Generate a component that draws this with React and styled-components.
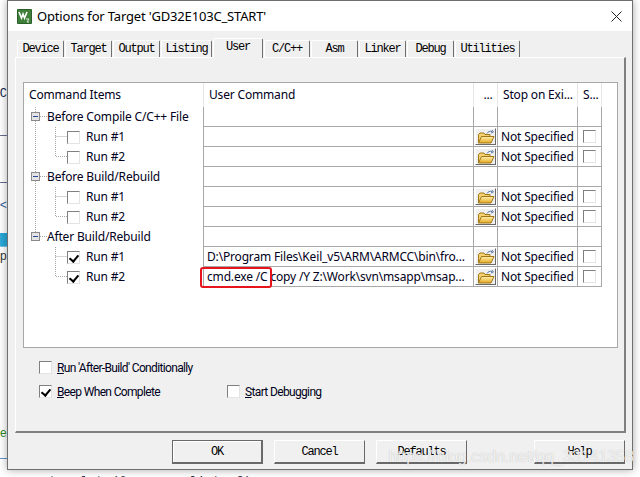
import React from "react";
import styled, { createGlobalStyle } from "styled-components";

const UI_FONT = `"Noto Sans", "Open Sans", "Liberation Sans", sans-serif`;
const MONO_FONT = `"Liberation Mono", "DejaVu Sans Mono", monospace`;

const tabs = [
  { label: "Device", width: 47 },
  { label: "Target", width: 47 },
  { label: "Output", width: 47 },
  { label: "Listing", width: 51 },
  { label: "User", width: 50, active: true },
  { label: "C/C++", width: 46 },
  { label: "Asm", width: 47 },
  { label: "Linker", width: 47 },
  { label: "Debug", width: 47 },
  { label: "Utilities", width: 65 },
];

const groups = [
  {
    title: "Before Compile C/C++ File",
    runs: [{ name: "Run #1" }, { name: "Run #2" }],
  },
  {
    title: "Before Build/Rebuild",
    runs: [{ name: "Run #1" }, { name: "Run #2" }],
  },
  {
    title: "After Build/Rebuild",
    last: true,
    runs: [
      { name: "Run #1", checked: true, command: "D:\\Program Files\\Keil_v5\\ARM\\ARMCC\\bin\\fro..." },
      { name: "Run #2", checked: true, marked: "cmd.exe /C", command: " copy /Y Z:\\Work\\svn\\msapp\\msap..." },
    ],
  },
];

const gutterLines = [
  { text: "IC", top: 87, color: "#14284a" },
  { text: "e _", top: 23, color: "#101c50" },
  { text: "e _", top: 33, color: "#101c50" },
  { text: "<", top: 14, color: "#3060a0" },
  { text: "█", top: 20, color: "#28a8d8" },
  { text: "ap", top: 3, color: "#333" },
  { text: "ce", top: 163, color: "#2a8a20" },
  { text: "I_", top: 6, color: "#1060b0" },
];

export default function App() {
  return (
    <>
      <GlobalStyle />
      <Desktop>
        <Gutter>
          {gutterLines.map((line, index) => (
            <CodeLine key={index} $top={line.top} $color={line.color}>
              {line.text}
            </CodeLine>
          ))}
        </Gutter>
        <Dialog>
          <TitleBar>
            <AppIcon />
            <Title>Options for Target 'GD32E103C_START'</Title>
            <CloseIcon />
          </TitleBar>
          <TabStrip>
            {tabs.map((tab) => (
              <Tab key={tab.label} $width={tab.width} $active={tab.active}>
                {tab.label}
              </Tab>
            ))}
          </TabStrip>
          <Panel>
            <List>
              <HeaderRow>
                <HeaderCell>Command Items</HeaderCell>
                <HeaderCell>User Command</HeaderCell>
                <HeaderCell $center>...</HeaderCell>
                <HeaderCell>Stop on Exi...</HeaderCell>
                <HeaderCell>S...</HeaderCell>
              </HeaderRow>
              {groups.map((group) => (
                <React.Fragment key={group.title}>
                  <GridRow>
                    <TreeCell>
                      <GroupGlyph last={group.last} />
                      {group.title}
                    </TreeCell>
                    <Cell />
                    <Cell />
                    <Cell />
                    <Cell />
                  </GridRow>
                  {group.runs.map((run, index) => (
                    <GridRow key={run.name}>
                      <TreeCell>
                        <RunGlyph trunk={!group.last} end={index === group.runs.length - 1} />
                        <CheckBox $checked={run.checked} />
                        <RunName>{run.name}</RunName>
                      </TreeCell>
                      <CommandCell>
                        {run.marked && <Marked>{run.marked}</Marked>}
                        {run.command}
                      </CommandCell>
                      <Cell>
                        <BrowseButton>
                          <FolderIcon />
                        </BrowseButton>
                      </Cell>
                      <StopCell>Not Specified</StopCell>
                      <Cell>
                        <CheckBox />
                      </Cell>
                    </GridRow>
                  ))}
                </React.Fragment>
              ))}
            </List>
            <Options>
              <Option>
                <CheckBox />
                <span>
                  <u>R</u>un 'After-Build' Conditionally
                </span>
              </Option>
              <span />
              <Option>
                <CheckBox $checked />
                <span>
                  <u>B</u>eep When Complete
                </span>
              </Option>
              <Option>
                <CheckBox />
                <span>
                  <u>S</u>tart Debugging
                </span>
              </Option>
            </Options>
          </Panel>
          <Footer>
            <Button $primary>OK</Button>
            <Button>Cancel</Button>
            <Button>Defaults</Button>
            <Button $push>Help</Button>
          </Footer>
          <Watermark>https://blog.csdn.net/qq_33141358</Watermark>
        </Dialog>
      </Desktop>
      <BehindText>  .. template(&amp;sys_mem_list, 0)</BehindText>
    </>
  );
}

function AppIcon() {
  return (
    <IconSvg width="15" height="15" viewBox="0 0 15 15">
      <rect width="15" height="15" rx="1" fill="#3f7f3a" />
      <rect x="0.5" y="0.5" width="14" height="14" rx="1" fill="none" stroke="#2a5f2a" />
      <path d="M2 3l2.5 6L6 5l1.5 4L10 3" fill="none" stroke="#fff" strokeWidth="1.6" />
      <path d="M9 10h3l-2 3h2" fill="none" stroke="#d8ead8" strokeWidth="1" />
    </IconSvg>
  );
}

function CloseIcon() {
  return (
    <CloseSvg width="11" height="11" viewBox="0 0 11 11">
      <path d="M0.5 0.5l10 10M10.5 0.5l-10 10" stroke="#222" strokeWidth="1" fill="none" />
    </CloseSvg>
  );
}

function GroupGlyph({ last }) {
  return (
    <GlyphSvg width="24" height="20" viewBox="0 0 24 20">
      <path
        d={last ? "M11.5 0V5" : "M11.5 0V5M11.5 14V20"}
        stroke="#a8a8a8"
        strokeDasharray="1 1"
        fill="none"
      />
      <path d="M16 9.5H24" stroke="#a8a8a8" strokeDasharray="1 1" fill="none" />
      <rect x="7.5" y="5.5" width="8" height="8" fill="#e4e4e4" stroke="#8a8a8a" />
      <path d="M9 9.5h5" stroke="#2a4a9a" fill="none" />
    </GlyphSvg>
  );
}

function RunGlyph({ trunk, end }) {
  return (
    <GlyphSvg width="44" height="20" viewBox="0 0 44 20">
      {trunk && <path d="M11.5 0V20" stroke="#a8a8a8" strokeDasharray="1 1" fill="none" />}
      <path
        d={end ? "M31.5 0V9.5H44" : "M31.5 0V20M31.5 9.5H44"}
        stroke="#a8a8a8"
        strokeDasharray="1 1"
        fill="none"
      />
    </GlyphSvg>
  );
}

function FolderIcon() {
  return (
    <svg width="18" height="14" viewBox="0 0 18 14">
      <defs>
        <linearGradient id="folderFront" x1="0" y1="0" x2="0" y2="1">
          <stop offset="0" stopColor="#fff0b0" />
          <stop offset="1" stopColor="#e8a820" />
        </linearGradient>
      </defs>
      <path d="M1.5 13V4.5L3 3h4l1 1.5h5V7" fill="#f4d070" stroke="#a07818" />
      <path d="M1.5 13L4.5 6.5H17L14 13Z" fill="url(#folderFront)" stroke="#a07818" />
      <path d="M10 3.5C11 1.5 13 1 15 1.5M15 0L16.5 2L14 3" fill="none" stroke="#5a78a8" />
    </svg>
  );
}

const GlobalStyle = createGlobalStyle`
  html, body {
    margin: 0;
    padding: 0;
    background: #fff;
    width: 640px;
    height: 477px;
    overflow: hidden;
  }
  * {
    box-sizing: border-box;
  }
`;

const Desktop = styled.div`
  display: flex;
  width: 640px;
  height: 470px;
`;

const Gutter = styled.div`
  width: 7px;
  flex: none;
  overflow: hidden;
  display: flex;
  flex-direction: column;
  align-items: flex-end;
`;

const CodeLine = styled.div`
  margin-top: ${(p) => p.$top}px;
  height: 14px;
  font: 12px/14px ${MONO_FONT};
  color: ${(p) => p.$color};
  white-space: nowrap;
`;

const Dialog = styled.div`
  position: relative;
  width: 626px;
  height: 470px;
  flex: none;
  display: flex;
  flex-direction: column;
  background: #f0f0f0;
  border: 1px solid #6f6f6f;
  box-shadow: 0 0 8px rgba(0, 0, 0, 0.35);
`;

const TitleBar = styled.div`
  height: 30px;
  flex: none;
  display: flex;
  align-items: center;
  gap: 5px;
  padding: 0 10px 0 9px;
  background: #fff;
`;

const IconSvg = styled.svg`
  flex: none;
`;

const CloseSvg = styled.svg`
  flex: none;
  margin-left: auto;
`;

const Title = styled.div`
  font: 13px/16px ${UI_FONT};
  letter-spacing: -0.17px;
  color: #000;
  white-space: nowrap;
`;

const TabStrip = styled.div`
  height: 26px;
  flex: none;
  display: flex;
  align-items: flex-end;
  gap: 1px;
  padding-left: 9px;
  position: relative;
  z-index: 1;
`;

const Tab = styled.div`
  width: ${(p) => p.$width}px;
  height: ${(p) => (p.$active ? 20 : 17)}px;
  margin-bottom: ${(p) => (p.$active ? -1 : 0)}px;
  padding-top: 1px;
  text-align: center;
  font: 12px/14px ${MONO_FONT};
  letter-spacing: -1.2px;
  color: #000;
  background: #f0f0f0;
  border-top: 1px solid #fff;
  border-left: 1px solid #fff;
  border-right: 1px solid #6f6f6f;
  border-radius: 2px 2px 0 0;
`;

const Panel = styled.div`
  width: 611px;
  height: 376px;
  flex: none;
  margin-left: 7px;
  padding: 24px 0 0 7px;
  border-top: 1px solid #fff;
  border-left: 1px solid #fff;
  border-right: 2px solid #808080;
  border-bottom: 2px solid #808080;
`;

const List = styled.div`
  width: 595px;
  height: 266px;
  background: #fff;
  border: 1px solid #a8a8a8;
  font: 12px/16px ${UI_FONT};
  letter-spacing: -0.17px;
  color: #000020;
`;

const COLUMNS = "180px 270px 24px 80px 24px";

const HeaderRow = styled.div`
  display: grid;
  grid-template-columns: ${COLUMNS};
  height: 24px;
`;

const HeaderCell = styled.div`
  display: flex;
  align-items: center;
  justify-content: ${(p) => (p.$center ? "center" : "flex-start")};
  padding-left: 5px;
  border-right: 1px solid #e6e6e6;
  white-space: nowrap;
  overflow: hidden;
`;

const GridRow = styled.div`
  display: grid;
  grid-template-columns: ${COLUMNS};
  height: 20px;
`;

const Cell = styled.div`
  display: flex;
  align-items: center;
  justify-content: center;
  border-right: 1px solid #a8a8a8;
  border-bottom: 1px solid #a8a8a8;
  white-space: pre;
`;

const TreeCell = styled.div`
  display: flex;
  align-items: center;
  border-right: 1px solid #a8a8a8;
  white-space: nowrap;
`;

const GlyphSvg = styled.svg`
  flex: none;
  margin-right: -1px;
`;

const RunName = styled.span`
  margin-left: 6px;
`;

const CommandCell = styled(Cell)`
  justify-content: flex-start;
  padding-left: 3px;
  overflow: visible;
`;

const StopCell = styled(Cell)`
  justify-content: flex-start;
  padding-left: 3px;
`;

const Marked = styled.span`
  position: relative;
  &::after {
    content: "";
    position: absolute;
    left: -7px;
    right: -5px;
    top: -2px;
    bottom: -3px;
    border: 2.5px solid #e8141c;
    border-radius: 3px;
  }
`;

const CheckBox = styled.span`
  flex: none;
  display: inline-block;
  position: relative;
  width: 13px;
  height: 13px;
  background: #fff;
  border-top: 1px solid #808080;
  border-left: 1px solid #808080;
  border-right: 1px solid #e4e4e4;
  border-bottom: 1px solid #e4e4e4;
  &::after {
    content: "";
    display: ${(p) => (p.$checked ? "block" : "none")};
    position: absolute;
    left: 3px;
    top: 1px;
    width: 4px;
    height: 7px;
    border-right: 2px solid #000;
    border-bottom: 2px solid #000;
    transform: rotate(40deg);
  }
`;

const BrowseButton = styled.div`
  width: 21px;
  height: 17px;
  display: flex;
  align-items: center;
  justify-content: center;
  background: #f0f0f0;
  border-top: 1px solid #fff;
  border-left: 1px solid #fff;
  border-right: 1px solid #696969;
  border-bottom: 1px solid #696969;
`;

const Options = styled.div`
  display: grid;
  grid-template-columns: 188px 200px;
  row-gap: 11px;
  margin: 13px 0 0 16px;
`;

const Option = styled.label`
  display: flex;
  align-items: center;
  gap: 5px;
  height: 13px;
  font: 12px/16px Roboto, "Liberation Sans", sans-serif;
  letter-spacing: -0.65px;
  color: #000020;
  white-space: nowrap;
`;

const Footer = styled.div`
  display: flex;
  gap: 11px;
  padding: 7px 7px 0 164px;
`;

const Button = styled.div`
  width: 91px;
  height: 24px;
  margin-left: ${(p) => (p.$push ? "auto" : 0)};
  display: flex;
  align-items: center;
  justify-content: center;
  font: 12px/14px ${MONO_FONT};
  letter-spacing: -1.2px;
  color: #000;
  background: #f0f0f0;
  border-top: 1px solid ${(p) => (p.$primary ? "#696969" : "#fff")};
  border-left: 1px solid ${(p) => (p.$primary ? "#696969" : "#fff")};
  border-right: ${(p) => (p.$primary ? "2px solid #696969" : "1px solid #696969")};
  border-bottom: 2px solid #696969;
  box-shadow: ${(p) => (p.$primary ? "inset 1px 1px 0 #fff" : "none")};
`;

const Watermark = styled.div`
  position: absolute;
  right: -2px;
  bottom: 2px;
  font: 16px/20px "Liberation Sans", sans-serif;
  color: rgba(255, 255, 255, 0.8);
  text-shadow: 0 0 1px rgba(120, 120, 120, 0.5);
  white-space: nowrap;
`;

const BehindText = styled.div`
  padding: 5px 0 0 10px;
  height: 7px;
  overflow: visible;
  font: 13px/14px ${MONO_FONT};
  color: #30304a;
  white-space: pre;
`;
